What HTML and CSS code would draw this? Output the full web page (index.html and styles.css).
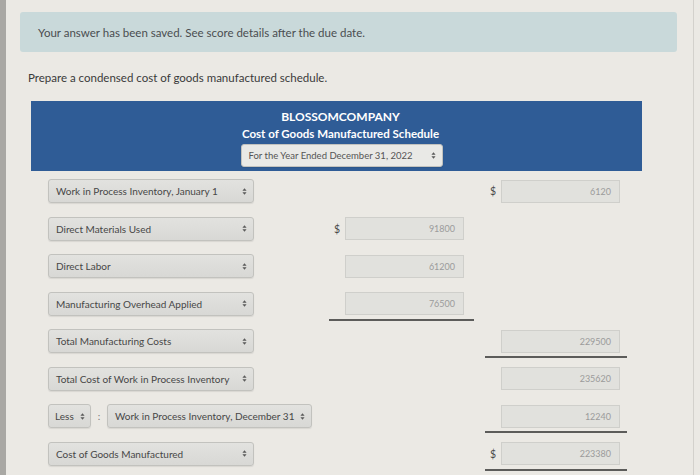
FILE: index.html
```html
<!DOCTYPE html>
<html lang="en">
<head>
<meta charset="utf-8">
<title>Cost of Goods Manufactured Schedule</title>
<link rel="stylesheet" href="styles.css">
</head>
<body>
<div class="frame">
  <div class="page">
    <div class="notice">Your answer has been saved. See score details after the due date.</div>
    <p class="prompt">Prepare a condensed cost of goods manufactured schedule.</p>

    <div class="schedule">
      <div class="sched-head">
        <div class="company">BLOSSOMCOMPANY</div>
        <div class="title">Cost of Goods Manufactured Schedule</div>
        <div class="select period"><span>For the Year Ended December 31, 2022</span><svg class="arr" viewBox="0 0 6 10"><path d="M3 1 L5.5 4 H0.5 Z M3 9 L5.5 6 H0.5 Z"/></svg></div>
      </div>

      <div class="rows">
        <div class="row">
          <div class="label"><div class="select"><span>Work in Process Inventory, January 1</span><svg class="arr" viewBox="0 0 6 10"><path d="M3 1 L5.5 4 H0.5 Z M3 9 L5.5 6 H0.5 Z"/></svg></div></div>
          <div class="cell"></div>
          <div class="cell"><span class="cur">$</span><div class="field">6120</div></div>
        </div>
        <div class="row">
          <div class="label"><div class="select"><span>Direct Materials Used</span><svg class="arr" viewBox="0 0 6 10"><path d="M3 1 L5.5 4 H0.5 Z M3 9 L5.5 6 H0.5 Z"/></svg></div></div>
          <div class="cell"><span class="cur">$</span><div class="field">91800</div></div>
          <div class="cell"></div>
        </div>
        <div class="row">
          <div class="label"><div class="select"><span>Direct Labor</span><svg class="arr" viewBox="0 0 6 10"><path d="M3 1 L5.5 4 H0.5 Z M3 9 L5.5 6 H0.5 Z"/></svg></div></div>
          <div class="cell"><span class="cur"></span><div class="field">61200</div></div>
          <div class="cell"></div>
        </div>
        <div class="row">
          <div class="label"><div class="select"><span>Manufacturing Overhead Applied</span><svg class="arr" viewBox="0 0 6 10"><path d="M3 1 L5.5 4 H0.5 Z M3 9 L5.5 6 H0.5 Z"/></svg></div></div>
          <div class="cell ruled"><span class="cur"></span><div class="field">76500</div></div>
          <div class="cell"></div>
        </div>
        <div class="row">
          <div class="label"><div class="select"><span>Total Manufacturing Costs</span><svg class="arr" viewBox="0 0 6 10"><path d="M3 1 L5.5 4 H0.5 Z M3 9 L5.5 6 H0.5 Z"/></svg></div></div>
          <div class="cell"></div>
          <div class="cell ruled"><span class="cur"></span><div class="field">229500</div></div>
        </div>
        <div class="row">
          <div class="label"><div class="select"><span>Total Cost of Work in Process Inventory</span><svg class="arr" viewBox="0 0 6 10"><path d="M3 1 L5.5 4 H0.5 Z M3 9 L5.5 6 H0.5 Z"/></svg></div></div>
          <div class="cell"></div>
          <div class="cell"><span class="cur"></span><div class="field">235620</div></div>
        </div>
        <div class="row">
          <div class="label split">
            <div class="select less"><span>Less</span><svg class="arr" viewBox="0 0 6 10"><path d="M3 1 L5.5 4 H0.5 Z M3 9 L5.5 6 H0.5 Z"/></svg></div>
            <span class="colon">:</span>
            <div class="select wide"><span>Work in Process Inventory, December 31</span><svg class="arr" viewBox="0 0 6 10"><path d="M3 1 L5.5 4 H0.5 Z M3 9 L5.5 6 H0.5 Z"/></svg></div>
          </div>
          <div class="cell"></div>
          <div class="cell ruled"><span class="cur"></span><div class="field">12240</div></div>
        </div>
        <div class="row">
          <div class="label"><div class="select"><span>Cost of Goods Manufactured</span><svg class="arr" viewBox="0 0 6 10"><path d="M3 1 L5.5 4 H0.5 Z M3 9 L5.5 6 H0.5 Z"/></svg></div></div>
          <div class="cell"></div>
          <div class="cell ruled"><span class="cur">$</span><div class="field">223380</div></div>
        </div>
      </div>
    </div>
  </div>
</div>
</body>
</html>
```

FILE: styles.css
```css
html, body {
  margin: 0;
  padding: 0;
  height: 100%;
}
body {
  background: #ebe9e4;
  font-family: Lato, "Open Sans", "Liberation Sans", sans-serif;
  color: #3d3d3d;
  overflow: hidden;
}
.frame {
  height: 475px;
  border-left: 6px solid #a9a8a4;
  box-sizing: border-box;
  width: 694px;
  border-right: 1px solid #d3d1cc;
}
.page {
  padding: 12px 0 0 14px;
}
.notice {
  width: 657px;
  height: 40px;
  box-sizing: border-box;
  background: #c9d9da;
  border-radius: 3px;
  padding-left: 18px;
  display: flex;
  align-items: center;
  font-size: 11.5px;
  color: #4a4d50;
}
.prompt {
  margin: 18px 0 0 8px;
  font-size: 11.5px;
  line-height: 16px;
  color: #3a3a3a;
}
.schedule {
  margin: 15px 0 0 11px;
}
.sched-head {
  width: 611px;
  height: 70px;
  box-sizing: border-box;
  background: #2f5c96;
  display: flex;
  flex-direction: column;
  align-items: center;
  padding-top: 8px;
  color: #fff;
  font-weight: 700;
}
.company {
  font-size: 12px;
  line-height: 16px;
  padding-left: 8px;
}
.title {
  font-size: 11.5px;
  line-height: 17px;
  padding-left: 8px;
}
.select {
  height: 24px;
  box-sizing: border-box;
  background: linear-gradient(#e2e2df, #d8d8d5);
  border: 1px solid #c2c2be;
  border-radius: 3px;
  box-shadow: 0 1px 1px rgba(0,0,0,0.08);
  display: flex;
  align-items: center;
  justify-content: space-between;
  gap: 6px;
  padding: 0 6px 0 7px;
  font-size: 10px;
  color: #474747;
  white-space: nowrap;
}
.arr {
  width: 5px;
  height: 9px;
  fill: #5a5a5a;
  flex: none;
}
.period {
  width: 202px;
  height: 23px;
  margin-top: 2px;
  margin-left: 10px;
  background: #e9e9e6;
  color: #555;
  font-weight: 400;
  font-size: 9.5px;
  padding: 0 6px 0 7px;
}
.rows {
  padding: 8px 0 0 17px;
  display: flex;
  flex-direction: column;
}
.row {
  display: grid;
  grid-template-columns: 281px 145px 11px 142px;
  height: 37.5px;
  align-items: start;
}
.row .cell:nth-child(2) { grid-column: 2; }
.row .cell:nth-child(3) { grid-column: 4; }
.label > .select { width: 206px; }
.label.split {
  display: flex;
  align-items: center;
  width: 270px;
}
.select.less {
  width: 43px;
  padding: 0 5px 0 6px;
}
.colon {
  width: 16px;
  text-align: center;
  font-size: 10px;
  color: #777;
}
.select.wide {
  width: 205px;
  flex: none;
}
.cell {
  display: flex;
  align-items: center;
  height: 24px;
  box-sizing: content-box;
}
.cell.ruled {
  padding-bottom: 3px;
  border-bottom: 2px solid #5c5c5a;
}
.cur {
  width: 16px;
  text-align: center;
  font-size: 10.5px;
  color: #4a4a4a;
  flex: none;
}
.field {
  width: 119px;
  height: 23px;
  box-sizing: border-box;
  background: #e1e1dd;
  border: 1px solid #cfcfcb;
  display: flex;
  align-items: center;
  justify-content: flex-end;
  padding-right: 8px;
  font-size: 9px;
  color: #9b9b9b;
}
```
